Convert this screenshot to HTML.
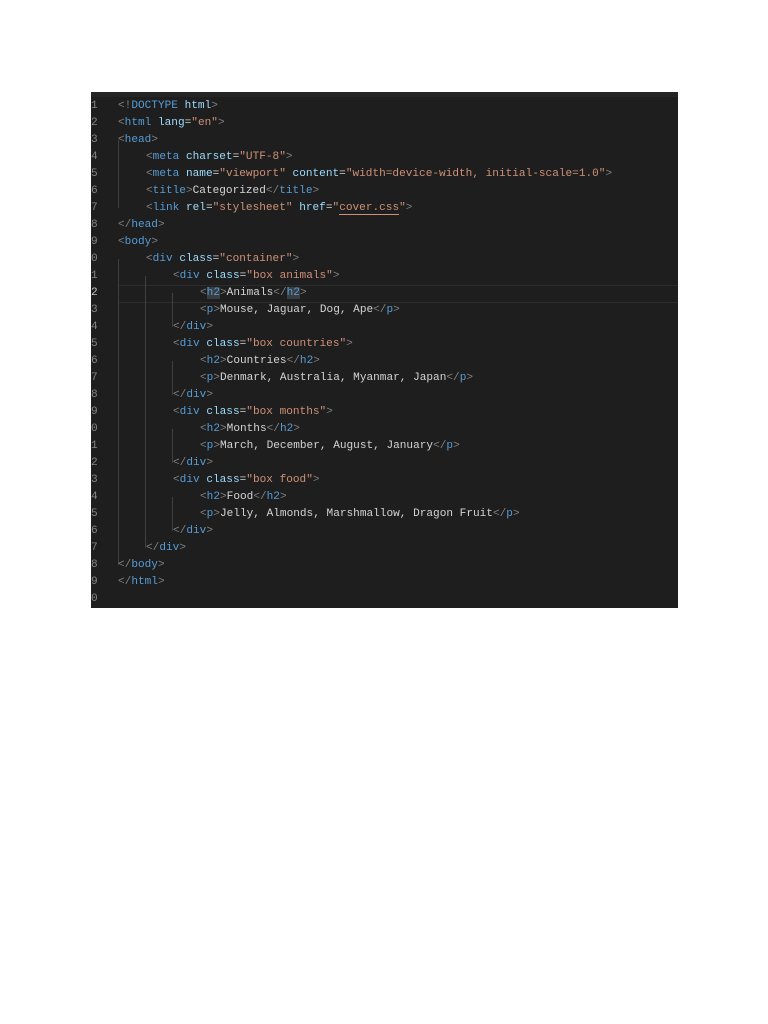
<!DOCTYPE html>
<html><head><style>
body{margin:0;width:768px;height:1024px;background:#fff;position:relative;overflow:hidden}
#ed{position:absolute;left:91px;top:92px;width:587px;height:516px;background:#1e1e1e}
#top{position:absolute;left:0;top:0;width:587px;height:5px;background:#252526}
.l{position:absolute;left:0;height:17px;font:11.1px/17px "Liberation Mono",monospace;white-space:pre;color:#d4d4d4}
.n{position:absolute;left:0;width:8px;overflow:hidden;color:#858585;font:11.1px/17px "Liberation Mono",monospace}
.g{color:#808080}.t{color:#569cd6}.a{color:#9cdcfe}.s{color:#ce9178}
.guide{position:absolute;width:1px;background:#404040}
#hl{position:absolute;left:27px;top:193px;width:560px;height:16px;border-top:1px solid #2d2d2d;border-bottom:1px solid #2d2d2d}
</style></head><body>
<div id="ed">
<div id="top"></div>
<div id="hl"></div>
<div class="guide" style="left:27px;top:48px;height:68px"></div>
<div class="guide" style="left:27px;top:167px;height:306px"></div>
<div class="guide" style="left:54px;top:184px;height:272px"></div>
<div class="guide" style="left:81px;top:201px;height:34px"></div>
<div class="guide" style="left:81px;top:269px;height:34px"></div>
<div class="guide" style="left:81px;top:337px;height:34px"></div>
<div class="guide" style="left:81px;top:405px;height:34px"></div>
</div>
<div style="position:absolute;left:91px;top:98px">
<div class="n" style="top:0">1</div><div class="n" style="top:17px">2</div><div class="n" style="top:34px">3</div><div class="n" style="top:51px">4</div><div class="n" style="top:68px">5</div><div class="n" style="top:85px">6</div><div class="n" style="top:102px">7</div><div class="n" style="top:119px">8</div><div class="n" style="top:136px">9</div><div class="n" style="top:153px">0</div><div class="n" style="top:170px">1</div><div class="n" style="top:187px;color:#c6c6c6">2</div><div class="n" style="top:204px">3</div><div class="n" style="top:221px">4</div><div class="n" style="top:238px">5</div><div class="n" style="top:255px">6</div><div class="n" style="top:272px">7</div><div class="n" style="top:289px">8</div><div class="n" style="top:306px">9</div><div class="n" style="top:323px">0</div><div class="n" style="top:340px">1</div><div class="n" style="top:357px">2</div><div class="n" style="top:374px">3</div><div class="n" style="top:391px">4</div><div class="n" style="top:408px">5</div><div class="n" style="top:425px">6</div><div class="n" style="top:442px">7</div><div class="n" style="top:459px">8</div><div class="n" style="top:476px">9</div><div class="n" style="top:493px">0</div>

<div class="l" style="left:27px;top:0"><span class="g">&lt;!</span><span class="t">DOCTYPE</span> <span class="a">html</span><span class="g">&gt;</span></div>
<div class="l" style="left:27px;top:17px"><span class="g">&lt;</span><span class="t">html</span> <span class="a">lang</span>=<span class="s">"en"</span><span class="g">&gt;</span></div>
<div class="l" style="left:27px;top:34px"><span class="g">&lt;</span><span class="t">head</span><span class="g">&gt;</span></div>
<div class="l" style="left:55px;top:51px"><span class="g">&lt;</span><span class="t">meta</span> <span class="a">charset</span>=<span class="s">"UTF-8"</span><span class="g">&gt;</span></div>
<div class="l" style="left:55px;top:68px"><span class="g">&lt;</span><span class="t">meta</span> <span class="a">name</span>=<span class="s">"viewport"</span> <span class="a">content</span>=<span class="s">"width=device-width, initial-scale=1.0"</span><span class="g">&gt;</span></div>
<div class="l" style="left:55px;top:85px"><span class="g">&lt;</span><span class="t">title</span><span class="g">&gt;</span>Categorized<span class="g">&lt;/</span><span class="t">title</span><span class="g">&gt;</span></div>
<div class="l" style="left:55px;top:102px"><span class="g">&lt;</span><span class="t">link</span> <span class="a">rel</span>=<span class="s">"stylesheet"</span> <span class="a">href</span>=<span class="s">"<span style="border-bottom:1px solid #ce9178">cover.css</span>"</span><span class="g">&gt;</span></div>
<div class="l" style="left:27px;top:119px"><span class="g">&lt;/</span><span class="t">head</span><span class="g">&gt;</span></div>
<div class="l" style="left:27px;top:136px"><span class="g">&lt;</span><span class="t">body</span><span class="g">&gt;</span></div>
<div class="l" style="left:55px;top:153px"><span class="g">&lt;</span><span class="t">div</span> <span class="a">class</span>=<span class="s">"container"</span><span class="g">&gt;</span></div>
<div class="l" style="left:82px;top:170px"><span class="g">&lt;</span><span class="t">div</span> <span class="a">class</span>=<span class="s">"box animals"</span><span class="g">&gt;</span></div>
<div class="l" style="left:109px;top:187px"><span class="g">&lt;</span><span class="t" style="background:#3a3d41">h2</span><span class="g">&gt;</span>Animals<span class="g">&lt;/</span><span class="t" style="background:#3a3d41">h2</span><span class="g">&gt;</span></div>
<div class="l" style="left:109px;top:204px"><span class="g">&lt;</span><span class="t">p</span><span class="g">&gt;</span>Mouse, Jaguar, Dog, Ape<span class="g">&lt;/</span><span class="t">p</span><span class="g">&gt;</span></div>
<div class="l" style="left:82px;top:221px"><span class="g">&lt;/</span><span class="t">div</span><span class="g">&gt;</span></div>
<div class="l" style="left:82px;top:238px"><span class="g">&lt;</span><span class="t">div</span> <span class="a">class</span>=<span class="s">"box countries"</span><span class="g">&gt;</span></div>
<div class="l" style="left:109px;top:255px"><span class="g">&lt;</span><span class="t">h2</span><span class="g">&gt;</span>Countries<span class="g">&lt;/</span><span class="t">h2</span><span class="g">&gt;</span></div>
<div class="l" style="left:109px;top:272px"><span class="g">&lt;</span><span class="t">p</span><span class="g">&gt;</span>Denmark, Australia, Myanmar, Japan<span class="g">&lt;/</span><span class="t">p</span><span class="g">&gt;</span></div>
<div class="l" style="left:82px;top:289px"><span class="g">&lt;/</span><span class="t">div</span><span class="g">&gt;</span></div>
<div class="l" style="left:82px;top:306px"><span class="g">&lt;</span><span class="t">div</span> <span class="a">class</span>=<span class="s">"box months"</span><span class="g">&gt;</span></div>
<div class="l" style="left:109px;top:323px"><span class="g">&lt;</span><span class="t">h2</span><span class="g">&gt;</span>Months<span class="g">&lt;/</span><span class="t">h2</span><span class="g">&gt;</span></div>
<div class="l" style="left:109px;top:340px"><span class="g">&lt;</span><span class="t">p</span><span class="g">&gt;</span>March, December, August, January<span class="g">&lt;/</span><span class="t">p</span><span class="g">&gt;</span></div>
<div class="l" style="left:82px;top:357px"><span class="g">&lt;/</span><span class="t">div</span><span class="g">&gt;</span></div>
<div class="l" style="left:82px;top:374px"><span class="g">&lt;</span><span class="t">div</span> <span class="a">class</span>=<span class="s">"box food"</span><span class="g">&gt;</span></div>
<div class="l" style="left:109px;top:391px"><span class="g">&lt;</span><span class="t">h2</span><span class="g">&gt;</span>Food<span class="g">&lt;/</span><span class="t">h2</span><span class="g">&gt;</span></div>
<div class="l" style="left:109px;top:408px"><span class="g">&lt;</span><span class="t">p</span><span class="g">&gt;</span>Jelly, Almonds, Marshmallow, Dragon Fruit<span class="g">&lt;/</span><span class="t">p</span><span class="g">&gt;</span></div>
<div class="l" style="left:82px;top:425px"><span class="g">&lt;/</span><span class="t">div</span><span class="g">&gt;</span></div>
<div class="l" style="left:55px;top:442px"><span class="g">&lt;/</span><span class="t">div</span><span class="g">&gt;</span></div>
<div class="l" style="left:27px;top:459px"><span class="g">&lt;/</span><span class="t">body</span><span class="g">&gt;</span></div>
<div class="l" style="left:27px;top:476px"><span class="g">&lt;/</span><span class="t">html</span><span class="g">&gt;</span></div>
</div>
</body></html>
